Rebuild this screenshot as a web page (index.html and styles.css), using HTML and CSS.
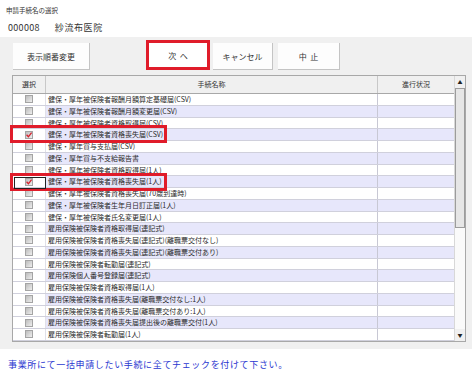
FILE: index.html
```
<!DOCTYPE html>
<html lang="ja">
<head>
<meta charset="utf-8">
<link rel="stylesheet" href="styles.css">
</head>
<body>
<div class="title">申請手続名の選択</div>
<div class="clinic"><span class="code">000008</span><span class="name">紗流布医院</span></div>
<div class="panel">
  <div class="toolbar">
    <button class="btn btn-order">表示順番変更</button>
    <div class="mark-btn"><button class="btn btn-next">次&nbsp;&nbsp;へ</button></div>
    <button class="btn btn-cancel">キャンセル</button>
    <button class="btn btn-stop">中&nbsp;&nbsp;止</button>
  </div>
  <div class="grid">
    <div class="table">
      <div class="head">
        <div class="c-check">選択</div>
        <div class="c-name">手続名称</div>
        <div class="c-status">進行状況</div>
      </div>
      <div class="body" id="body">
        <div class="mark mark1"></div>
        <div class="mark mark2"></div>
        <div class="focus"></div>
      </div>
    </div>
    <div class="scroll">
      <div class="sb-btn">▲</div>
      <div class="sb-thumb"></div>
      <div class="sb-track"></div>
      <div class="sb-btn">▼</div>
    </div>
  </div>
</div>
<div class="note">事業所にて一括申請したい手続に全てチェックを付けて下さい。</div>
<script src="app.js"></script>
</body>
</html>
```
FILE: app.js
```
var rows = [
  "健保・厚年被保険者報酬月額算定基礎届(CSV)",
  "健保・厚年被保険者報酬月額変更届(CSV)",
  "健保・厚年被保険者資格取得届(CSV)",
  "健保・厚年被保険者資格喪失届(CSV)",
  "健保・厚年賞与支払届(CSV)",
  "健保・厚年賞与不支給報告書",
  "健保・厚年被保険者資格取得届(1人)",
  "健保・厚年被保険者資格喪失届(1人)",
  "健保・厚年被保険者資格喪失届(70歳到達時)",
  "健保・厚年被保険者生年月日訂正届(1人)",
  "健保・厚年被保険者氏名変更届(1人)",
  "雇用保険被保険者資格取得届(連記式)",
  "雇用保険被保険者資格喪失届(連記式)(離職票交付なし)",
  "雇用保険被保険者資格喪失届(連記式)(離職票交付あり)",
  "雇用保険被保険者転勤届(連記式)",
  "雇用保険個人番号登録届(連記式)",
  "雇用保険被保険者資格取得届(1人)",
  "雇用保険被保険者資格喪失届(離職票交付なし:1人)",
  "雇用保険被保険者資格喪失届(離職票交付あり:1人)",
  "雇用保険被保険者資格喪失届提出後の離職票交付(1人)",
  "雇用保険被保険者転勤届(1人)"
];
var checked = {3: true, 7: true};
var body = document.getElementById("body");
var box = '<svg class="cb" width="8" height="8" viewBox="0 0 8 8"><defs><linearGradient id="g" x1="0" y1="0" x2="1" y2="1"><stop offset="0" stop-color="#b8b8b8"/><stop offset="1" stop-color="#f2f2f2"/></linearGradient></defs><rect x="0.5" y="0.5" width="7" height="7" fill="url(#g)" stroke="#a4a4a4"/>';
rows.forEach(function (t, i) {
  var r = document.createElement("div");
  r.className = "row" + (i % 2 ? " alt" : "");
  var svg = box + (checked[i] ? '<path d="M1.6 3.8 L3.4 5.8 L6.6 1.6" fill="none" stroke="#d8202c" stroke-width="1.3"/>' : '') + '</svg>';
  r.innerHTML = '<div class="c-check">' + svg + '</div><div class="c-name">' + t + '</div><div class="c-status"></div>';
  body.appendChild(r);
});
```
FILE: styles.css
```
* { box-sizing: border-box; }
body {
  margin: 0;
  width: 474px;
  height: 382px;
  background: #fff;
  font-family: "Noto Sans CJK JP", "Liberation Sans", sans-serif;
  color: #222;
  overflow: hidden;
}
.title {
  height: 18px;
  line-height: 20px;
  padding-left: 6px;
  font-size: 6.5px;
  color: #333;
}
.clinic {
  height: 19px;
  line-height: 20px;
  padding-left: 8px;
  font-size: 9px;
  color: #333;
}
.clinic .code { letter-spacing: 0.3px; }
.clinic .name { margin-left: 15px; letter-spacing: 0.6px; }
.panel {
  width: 472px;
  height: 312px;
  background: #f0f0f0;
  padding: 3px 0 0 12px;
}
.toolbar {
  display: flex;
  align-items: flex-end;
  height: 30px;
  padding-left: 1px;
}
.btn {
  font-family: inherit;
  font-size: 8px;
  color: #333;
  background: #fdfdfd;
  border: none;
  border-right: 1px solid #c4c4c4;
  border-bottom: 1px solid #c4c4c4;
  height: 27px;
  padding: 0;
  margin: 0;
}
.btn-order { width: 77px; }
.mark-btn {
  margin-left: 56px;
  width: 64px;
  height: 30px;
  border: 3px solid #e01c2a;
  background: #fdfdfd;
  display: flex;
}
.btn-next { width: 58px; height: 24px; border: none; background: #fff; }
.btn-cancel { width: 60px; margin-left: 3px; }
.btn-stop { width: 62px; margin-left: 5px; }
.grid {
  margin-top: 5px;
  width: 454px;
  height: 267px;
  border: 1px solid #a8a8a8;
  background: #fff;
  display: flex;
}
.table { width: 441px; display: flex; flex-direction: column; }
.head {
  height: 18px;
  display: flex;
  background: #f0f0f0;
  border-bottom: 1px solid #a8a8a8;
  font-size: 7px;
  line-height: 17px;
  color: #333;
  text-align: center;
}
.c-check { width: 33px; flex: none; }
.c-name { width: 331px; flex: none; }
.c-status { flex: 1; border-left: 1px solid #c8c8d4; }
.head .c-check { border-right: 1px solid #c8c8c8; }
.head .c-status { border-left: 1px solid #c8c8c8; }
.body { position: relative; flex: 1; }
.row {
  height: 11.75px;
  display: flex;
  font-size: 7px;
  line-height: 11px;
  color: #2a2a2a;
  border-bottom: 1px solid #d0d0dc;
}
.row .c-name, .row .c-status { background: #fff; }
.row.alt .c-name, .row.alt .c-status { background: #e7e7fb; }
.row .c-check {
  background: #fff;
  display: flex;
  align-items: center;
  justify-content: center;
  border-right: 1px solid #e0e0e8;
}
.row .c-name { padding-left: 2px; white-space: nowrap; }
.cb { display: block; }
.mark {
  position: absolute;
  left: -3px;
  width: 157px;
  height: 18px;
  border: 3px solid #e01c2a;
}
.mark1 { top: 31px; }
.mark2 { top: 79px; }
.focus {
  position: absolute;
  left: 1px;
  top: 83px;
  width: 32px;
  height: 12px;
  border: 1.5px solid #222;
}
.scroll {
  width: 11px;
  display: flex;
  flex-direction: column;
  background: #f4f4f4;
  border-left: 1px solid #d8d8d8;
}
.sb-btn {
  height: 12px;
  font-size: 5px;
  line-height: 12px;
  text-align: center;
  color: #222;
  background: #f0f0f0;
}
.sb-thumb {
  height: 140px;
  background: #e6e6e6;
  border: 1px solid #9c9c9c;
}
.sb-track { flex: 1; background: #fafafa; }
.note {
  padding: 9px 0 0 8px;
  font-size: 9px;
  letter-spacing: 0.65px;
  color: #2b38d0;
}
```
